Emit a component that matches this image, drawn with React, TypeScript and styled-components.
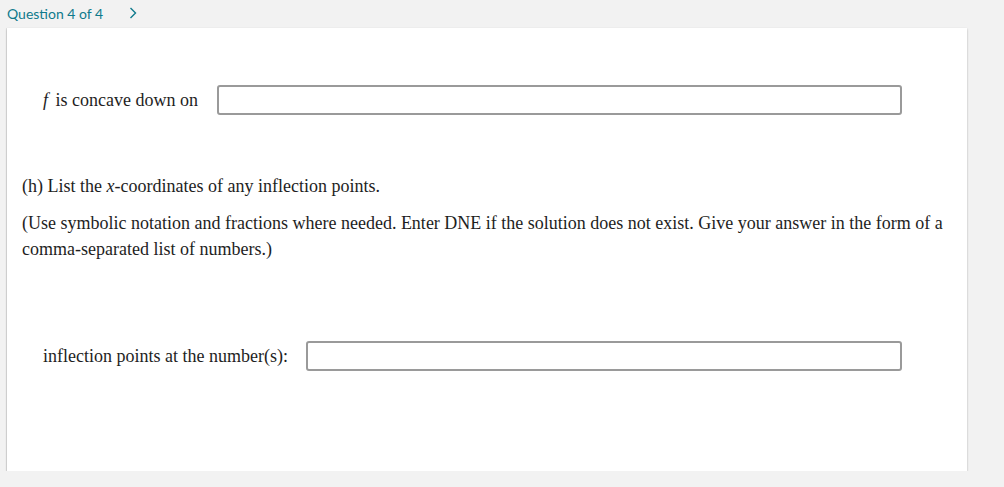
import React from "react";
import styled, { createGlobalStyle } from "styled-components";

const Global = createGlobalStyle`
  html, body { margin: 0; padding: 0; background: #f2f2f2; }
  body { font-family: "Liberation Serif", "Times New Roman", serif; }
`;

const Header = styled.div`
  height: 28px;
  display: flex;
  align-items: center;
  padding-left: 7px;
  font-family: Lato, "Open Sans", sans-serif;
  font-size: 14px;
  color: #0f7a8c;
  box-sizing: border-box;
  padding-bottom: 2px;
`;

const Chevron = styled.svg`
  margin-left: 25px;
  width: 10px;
  height: 12px;
`;

const Card = styled.div`
  margin-left: 7px;
  width: 960px;
  height: 443px;
  background: #fff;
  box-shadow: 0 1px 2px rgba(0, 0, 0, 0.28), -1px 0 0 rgba(0, 0, 0, 0.06);
  box-sizing: border-box;
  padding: 57px 65px 0 15px;
  display: flex;
  flex-direction: column;
  color: #1e1e1e;
  font-size: 18px;
`;

const Row = styled.div<{ $top: number }>`
  display: flex;
  align-items: center;
  margin-left: 21px;
  margin-top: ${(p) => p.$top}px;
  height: 30px;
`;

const Label = styled.span<{ $gap: number }>`
  margin-right: ${(p) => p.$gap}px;
  white-space: nowrap;
`;

const Var = styled.i<{ $space?: number }>`
  margin-right: ${(p) => p.$space ?? 0}px;
`;

const Field = styled.input`
  flex: 1;
  height: 30px;
  box-sizing: border-box;
  border: 2px solid #9a9a9a;
  border-radius: 3px;
  background: #fff;
  outline: none;
  font-family: inherit;
  font-size: 16px;
`;

const Para = styled.p<{ $top: number }>`
  margin: ${(p) => p.$top}px -48px 0 0;
  line-height: 26px;
`;

export default function App() {
  return (
    <>
      <Global />
      <Header>
        Question 4 of 4
        <Chevron viewBox="0 0 10 12">
          <path d="M2.5 1 L7.5 6 L2.5 11" fill="none" stroke="#0f7a8c" strokeWidth="1.4" />
        </Chevron>
      </Header>
      <Card>
        <Row $top={0}>
          <Label $gap={19}>
            <Var $space={3}>f</Var> is concave down on
          </Label>
          <Field />
        </Row>
        <Para $top={58}>
          (h) List the <Var>x</Var>-coordinates of any inflection points.
        </Para>
        <Para $top={11}>
          (Use symbolic notation and fractions where needed. Enter DNE if the solution does not exist. Give your answer in the form of a comma-separated list of numbers.)
        </Para>
        <Row $top={79}>
          <Label $gap={18}>inflection points at the number(s):</Label>
          <Field />
        </Row>
      </Card>
    </>
  );
}
